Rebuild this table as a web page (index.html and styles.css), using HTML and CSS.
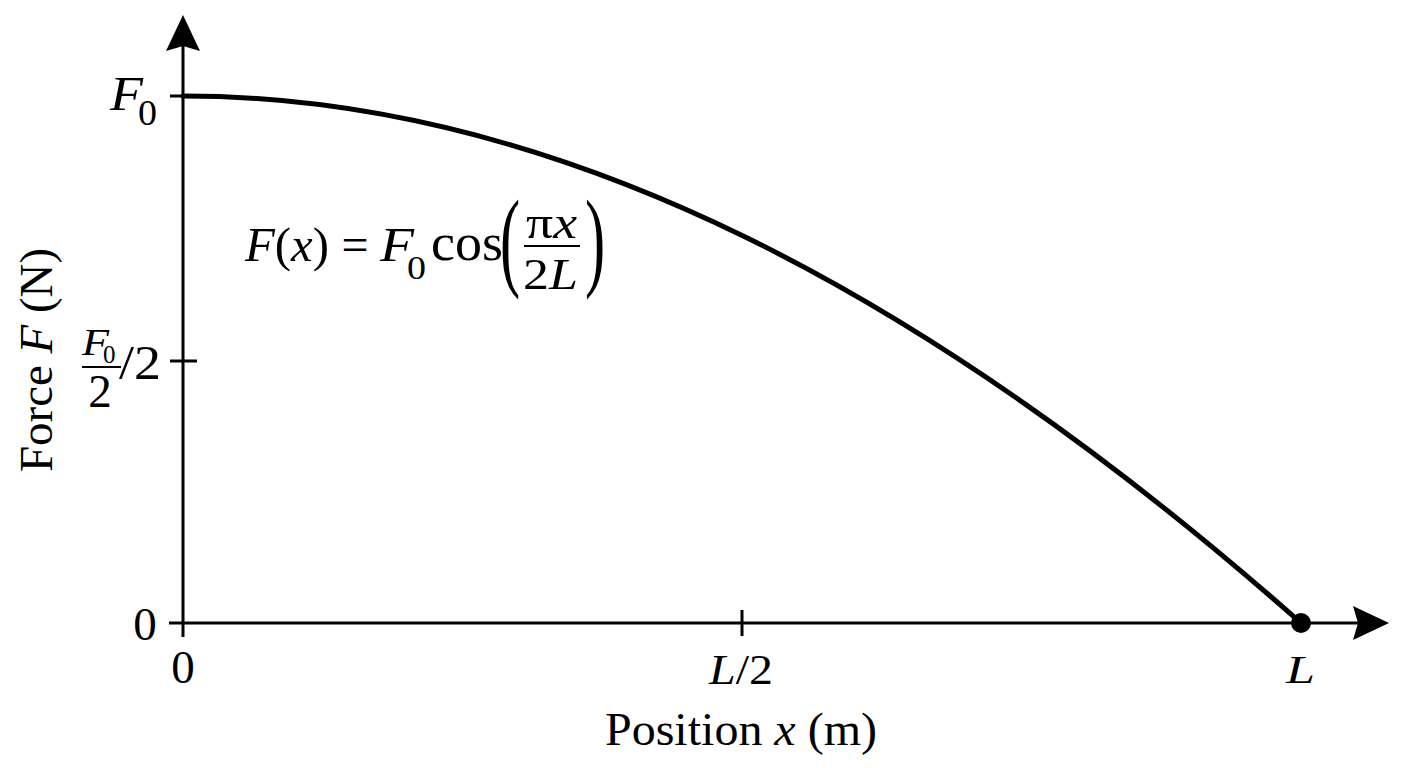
FILE: index.html
```html
<!DOCTYPE html>
<html lang="en">
<head>
<meta charset="utf-8">
<title>Force vs Position</title>
<link rel="stylesheet" href="styles.css">
</head>
<body>
<div class="figure">
<svg class="plot" width="1408" height="768" viewBox="0 0 1408 768" xmlns="http://www.w3.org/2000/svg">
  <!-- axes -->
  <line class="axis" x1="183" y1="44" x2="183" y2="637"/>
  <polygon class="head" points="183,15 166,51 183,46 200,51"/>
  <line class="axis" x1="169" y1="623" x2="1362" y2="623"/>
  <polygon class="head" points="1389,623 1353,606 1358,623 1353,640"/>
  <!-- ticks -->
  <line class="axis" x1="170" y1="96" x2="184" y2="96"/>
  <line class="axis" x1="170" y1="361" x2="197" y2="361"/>
  <line class="axis" x1="742" y1="610" x2="742" y2="636"/>
  <!-- curve -->
  <path class="curve" d="M183,96 C560,96 930,295 1301,623"/>
  <circle class="dot" cx="1301" cy="623" r="10"/>

  <!-- y labels -->
  <text class="label it sz48" x="110" y="110" textLength="33" lengthAdjust="spacingAndGlyphs">F</text>
  <text class="label sz36" x="138" y="125" textLength="19" lengthAdjust="spacingAndGlyphs">0</text>

  <text class="label it sz37" x="82" y="355" textLength="27" lengthAdjust="spacingAndGlyphs">F</text>
  <text class="label sz25" x="103" y="363">0</text>
  <line class="bar" x1="82" y1="367" x2="121" y2="367"/>
  <text class="label sz47" x="100" y="407" text-anchor="middle">2</text>
  <text class="label sz48" x="119" y="379" textLength="42" lengthAdjust="spacingAndGlyphs">/2</text>

  <text class="label sz47" x="145" y="640" text-anchor="middle">0</text>

  <!-- x labels -->
  <text class="label sz47" x="183" y="683" text-anchor="middle">0</text>
  <text class="label sz43" x="709" y="684" textLength="64" lengthAdjust="spacingAndGlyphs"><tspan class="it">L</tspan>/2</text>
  <text class="label it sz41" x="1286" y="683" textLength="29" lengthAdjust="spacingAndGlyphs">L</text>

  <!-- axis titles -->
  <text class="label sz46" x="605" y="745" textLength="272" lengthAdjust="spacingAndGlyphs">Position <tspan class="it">x</tspan> (m)</text>
  <text class="label sz46" transform="translate(52,360) rotate(-90)" text-anchor="middle" textLength="224" lengthAdjust="spacingAndGlyphs">Force <tspan class="it">F</tspan> (N)</text>

  <!-- formula -->
  <text class="label sz48" x="245" y="261" textLength="84" lengthAdjust="spacingAndGlyphs"><tspan class="it">F</tspan>(<tspan class="it">x</tspan>)</text>
  <text class="label sz48" x="355" y="261" text-anchor="middle">=</text>
  <text class="label it sz48" x="380" y="261" textLength="34" lengthAdjust="spacingAndGlyphs">F</text>
  <text class="label sz34" x="407" y="279" textLength="19" lengthAdjust="spacingAndGlyphs">0</text>
  <text class="label sz52" x="431" y="260" textLength="72" lengthAdjust="spacingAndGlyphs">cos</text>
  <text class="label paren" transform="translate(500,276) scale(0.55,1)">(</text>
  <text class="label sz46" x="526" y="238" textLength="51" lengthAdjust="spacingAndGlyphs">π<tspan class="it">x</tspan></text>
  <line class="bar" x1="524" y1="246" x2="580" y2="246"/>
  <text class="label sz45" x="523" y="289" textLength="55" lengthAdjust="spacingAndGlyphs">2<tspan class="it">L</tspan></text>
  <text class="label paren" transform="translate(585,276) scale(0.55,1)">)</text>
</svg>
</div>
</body>
</html>
```
FILE: styles.css
```css
html, body {
  margin: 0;
  padding: 0;
  background: #ffffff;
}

.figure {
  width: 1408px;
  height: 768px;
  overflow: hidden;
}

.plot {
  display: block;
}

.axis {
  stroke: #000;
  stroke-width: 3;
  fill: none;
}

.head {
  fill: #000;
  stroke: none;
}

.curve {
  fill: none;
  stroke: #000;
  stroke-width: 5;
  stroke-linecap: round;
}

.dot {
  fill: #000;
}

.bar {
  stroke: #000;
  stroke-width: 2.2;
}

.label {
  font-family: "Liberation Serif", "Times New Roman", serif;
  fill: #000;
}

.it {
  font-style: italic;
}

.sz25 { font-size: 25px; }
.sz34 { font-size: 34px; }
.sz36 { font-size: 36px; }
.sz37 { font-size: 37px; }
.sz41 { font-size: 41px; }
.sz43 { font-size: 43px; }
.sz45 { font-size: 45px; }
.sz46 { font-size: 46px; }
.sz47 { font-size: 47px; }
.sz48 { font-size: 48px; }
.sz52 { font-size: 52px; }

.paren {
  font-size: 110px;
}
```
